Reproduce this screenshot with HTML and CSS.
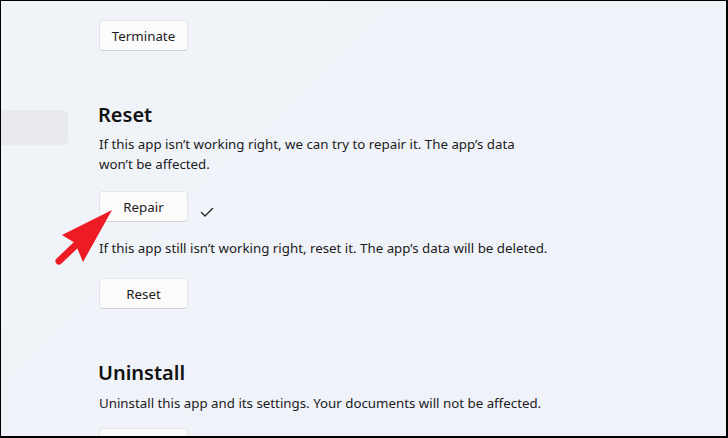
FILE: index.html
```html
<!DOCTYPE html>
<html lang="en">
<head>
<meta charset="utf-8">
<title>App settings</title>
<link rel="stylesheet" href="styles.css">
</head>
<body>
<div class="frame">
  <aside class="sidebar">
    <div class="nav-item"></div>
  </aside>
  <main class="content">
    <button class="btn">Terminate</button>

    <h2 class="heading heading-reset">Reset</h2>
    <p class="desc">If this app isn’t working right, we can try to repair it. The app’s data won’t be affected.</p>
    <div class="btn-row">
      <button class="btn">Repair</button>
      <svg class="check" width="14" height="12" viewBox="0 0 14 12"><polyline points="1.5,6.5 5,10 12.5,2.5" fill="none" stroke="#1b1b1b" stroke-width="1.2" stroke-linecap="round" stroke-linejoin="round"/></svg>
    </div>
    <p class="desc desc-2">If this app still isn’t working right, reset it. The app’s data will be deleted.</p>
    <button class="btn btn-reset">Reset</button>

    <h2 class="heading heading-uninstall">Uninstall</h2>
    <p class="desc desc-3">Uninstall this app and its settings. Your documents will not be affected.</p>
    <button class="btn btn-uninstall">Uninstall</button>
  </main>
  <svg class="arrow" width="728" height="438" viewBox="0 0 728 438">
    <polygon points="112,210 62,235 75,243 83,262" fill="#ed1c24"/>
    <line x1="78" y1="243" x2="59" y2="261" stroke="#ed1c24" stroke-width="7" stroke-linecap="round"/>
  </svg>
</div>
</body>
</html>
```
FILE: styles.css
```css
* { box-sizing: border-box; }
html, body { margin: 0; padding: 0; }
body {
  width: 728px;
  height: 438px;
  font-family: "Noto Sans", "Segoe UI", sans-serif;
  color: #1b1b1b;
  background: #000;
}
.frame {
  position: relative;
  width: 728px;
  height: 438px;
  border-top: 1px solid #000;
  border-left: 1px solid #000;
  border-right: 2px solid #000;
  border-bottom: 2px solid #000;
  background: linear-gradient(135deg, #f0f3f8 0%, #eff2f8 60%, #f0f2f9 100%);
  display: flex;
  overflow: hidden;
}
.sidebar {
  width: 67px;
  flex: none;
  padding-top: 109px;
}
.nav-item {
  height: 35px;
  background: #e8eaee;
  border-radius: 0 5px 5px 0;
}
.content {
  flex: 1;
  padding: 19px 0 0 31px;
  display: flex;
  flex-direction: column;
  align-items: flex-start;
}
.btn {
  width: 89px;
  height: 31px;
  border: 1px solid #e3e5e8;
  border-bottom-color: #d0d2d6;
  border-radius: 4px;
  background: #fbfbfc;
  font-family: inherit;
  font-size: 13.3px;
  color: #1b1b1b;
  padding: 0;
  flex: none;
}
.heading {
  margin: 50px 0 0 -1px;
  font-size: 20px;
  line-height: 28px;
  font-weight: 600;
  color: #111;
}
.desc {
  margin: 5px 0 0;
  font-size: 13.3px;
  line-height: 20px;
  max-width: 440px;
}
.btn-row {
  margin-top: 17px;
  display: flex;
  align-items: center;
  gap: 12px;
}
.check { margin-top: 11px; }
.desc-2 { margin-top: 16px; max-width: none; }
.btn-reset { margin-top: 20px; }
.heading-uninstall { margin-top: 50px; }
.desc-3 { margin-top: 6px; max-width: none; }
.btn-uninstall { margin-top: 15px; }
.arrow {
  position: absolute;
  left: -1px;
  top: -1px;
  pointer-events: none;
}
```
